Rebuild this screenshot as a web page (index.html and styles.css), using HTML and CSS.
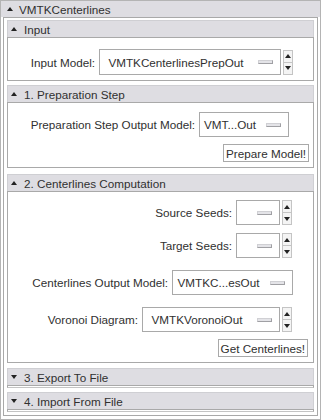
FILE: index.html
```html
<!DOCTYPE html>
<html>
<head>
<meta charset="utf-8">
<link rel="stylesheet" href="styles.css">
</head>
<body>
<div class="frame">
  <div class="top-head"><span class="tri up"></span><span class="title">VMTKCenterlines</span></div>
  <div class="panel">
    <div class="sec">
      <div class="sec-head"><span class="tri up"></span><span>Input</span></div>
      <div class="sec-body body-input">
        <div class="row r-input">
          <span class="lbl">Input Model:</span>
          <div class="combo w-input"><span class="ctext">VMTKCenterlinesPrepOut</span><span class="ind"></span></div>
          <div class="spin"><span class="sb"><span class="tri up"></span></span><span class="sb"><span class="tri down"></span></span></div>
        </div>
      </div>
    </div>
    <div class="sec s1">
      <div class="sec-head"><span class="tri up"></span><span>1. Preparation Step</span></div>
      <div class="sec-body body-prep">
        <div class="row r-prep">
          <span class="lbl">Preparation Step Output Model:</span>
          <div class="combo w-prep"><span class="ctext">VMT...Out</span><span class="ind"></span></div>
        </div>
        <div class="row r-btn1">
          <span class="btn">Prepare Model!</span>
        </div>
      </div>
    </div>
    <div class="sec s2">
      <div class="sec-head"><span class="tri up"></span><span>2. Centerlines Computation</span></div>
      <div class="sec-body body-cl">
        <div class="row r-src">
          <span class="lbl">Source Seeds:</span>
          <div class="combo w-seed"><span class="ctext"></span><span class="ind"></span></div>
          <div class="spin"><span class="sb"><span class="tri up"></span></span><span class="sb"><span class="tri down"></span></span></div>
        </div>
        <div class="row r-tgt">
          <span class="lbl">Target Seeds:</span>
          <div class="combo w-seed"><span class="ctext"></span><span class="ind"></span></div>
          <div class="spin"><span class="sb"><span class="tri up"></span></span><span class="sb"><span class="tri down"></span></span></div>
        </div>
        <div class="row r-out">
          <span class="lbl">Centerlines Output Model:</span>
          <div class="combo w-out"><span class="ctext">VMTKC...esOut</span><span class="ind"></span></div>
        </div>
        <div class="row r-vor">
          <span class="lbl">Voronoi Diagram:</span>
          <div class="combo w-vor"><span class="ctext">VMTKVoronoiOut</span><span class="ind"></span></div>
          <div class="spin"><span class="sb"><span class="tri up"></span></span><span class="sb"><span class="tri down"></span></span></div>
        </div>
        <div class="row r-btn2">
          <span class="btn">Get Centerlines!</span>
        </div>
      </div>
    </div>
    <div class="sec s3">
      <div class="sec-head"><span class="tri down"></span><span>3. Export To File</span></div>
      <div class="sec-body collapsed"></div>
    </div>
    <div class="sec s4">
      <div class="sec-head"><span class="tri down"></span><span>4. Import From File</span></div>
      <div class="sec-body collapsed"></div>
    </div>
  </div>
</div>
</body>
</html>
```

FILE: styles.css
```css
* { box-sizing: border-box; }
html, body { margin: 0; padding: 0; background: #ffffff; }
body {
  font-family: "Liberation Sans", Arial, sans-serif;
  font-size: 11.7px;
  color: #303030;
}
.frame {
  width: 321px;
  height: 420px;
  border: 1px solid #b4b4b4;
  background: #ffffff;
}
.top-head {
  height: 16px;
  background: #dedde2;
  display: flex;
  align-items: center;
  padding-left: 6px;
}
.top-head .title { margin-left: 6px; }
.panel {
  margin: 0 2px;
  height: 399px;
  border: 1px solid #a9a9a9;
  padding: 2px 3px;
  background: #ffffff;
}
.sec-head {
  height: 17px;
  background: #dedde2;
  border: 1px solid #cfcfd3;
  border-bottom: none;
  display: flex;
  align-items: center;
  padding-left: 3px;
}
.sec-head .tri { margin-right: 7px; }
.sec-body {
  border: 1px solid #a9a9a9;
  background: #ffffff;
  display: flex;
  flex-direction: column;
}
.s1 { margin-top: 4px; }
.s2 { margin-top: 6px; }
.s3 { margin-top: 5px; }
.s4 { margin-top: 4px; }
.body-input { height: 44px; padding-top: 11px; }
.body-prep { height: 66px; padding-top: 9px; }
.body-cl { height: 172px; padding-top: 8px; }
.collapsed { height: 3px; border-color: #a9a9a9 #a9a9a9 #c4c4c4 #a9a9a9; }

.tri {
  display: inline-block;
  width: 0;
  height: 0;
  border-left: 3px solid transparent;
  border-right: 3px solid transparent;
}
.tri.up { border-bottom: 4px solid #222; }
.tri.down { border-top: 4px solid #222; }

.row {
  display: flex;
  align-items: center;
  justify-content: flex-end;
}
.lbl { margin-right: 4px; white-space: nowrap; }
.r-input { padding-right: 20px; }
.r-prep { padding-right: 24px; }
.r-btn1 { padding-right: 4px; margin-top: 7px; }
.r-src { padding-right: 21px; }
.r-tgt { padding-right: 21px; margin-top: 8px; }
.r-out { padding-right: 20px; margin-top: 12px; }
.r-vor { padding-right: 21px; margin-top: 12px; }
.r-btn2 { padding-right: 5px; margin-top: 7px; }

.combo {
  height: 25px;
  border: 1px solid #a9a9a9;
  background: #ffffff;
  display: flex;
  align-items: center;
  padding-right: 7px;
}
.body-input .combo { height: 26px; }
.ctext { flex: 1; text-align: center; white-space: nowrap; }
.ind {
  width: 15px;
  height: 4px;
  background: #e4e4e8;
  border: 1px solid #d0d0d4;
  border-bottom-color: #a0a0a4;
  border-right-color: #a0a0a4;
  margin-left: 6px;
}
.w-input { width: 182px; }
.w-prep { width: 90px; }
.w-seed { width: 44px; }
.w-out { width: 121px; }
.w-vor { width: 138px; }

.spin {
  width: 10px;
  height: 25px;
  margin-left: 2px;
  display: flex;
  flex-direction: column;
  border: 1px solid #c4c4c4;
}
.sb {
  flex: 1;
  display: flex;
  align-items: center;
  justify-content: center;
  background: #f4f4f4;
}
.sb + .sb { border-top: 1px solid #c4c4c4; }

.btn {
  height: 18px;
  border: 1px solid #a9a9a9;
  background: #ffffff;
  padding: 0 2px;
  display: flex;
  align-items: center;
  white-space: nowrap;
}
```
